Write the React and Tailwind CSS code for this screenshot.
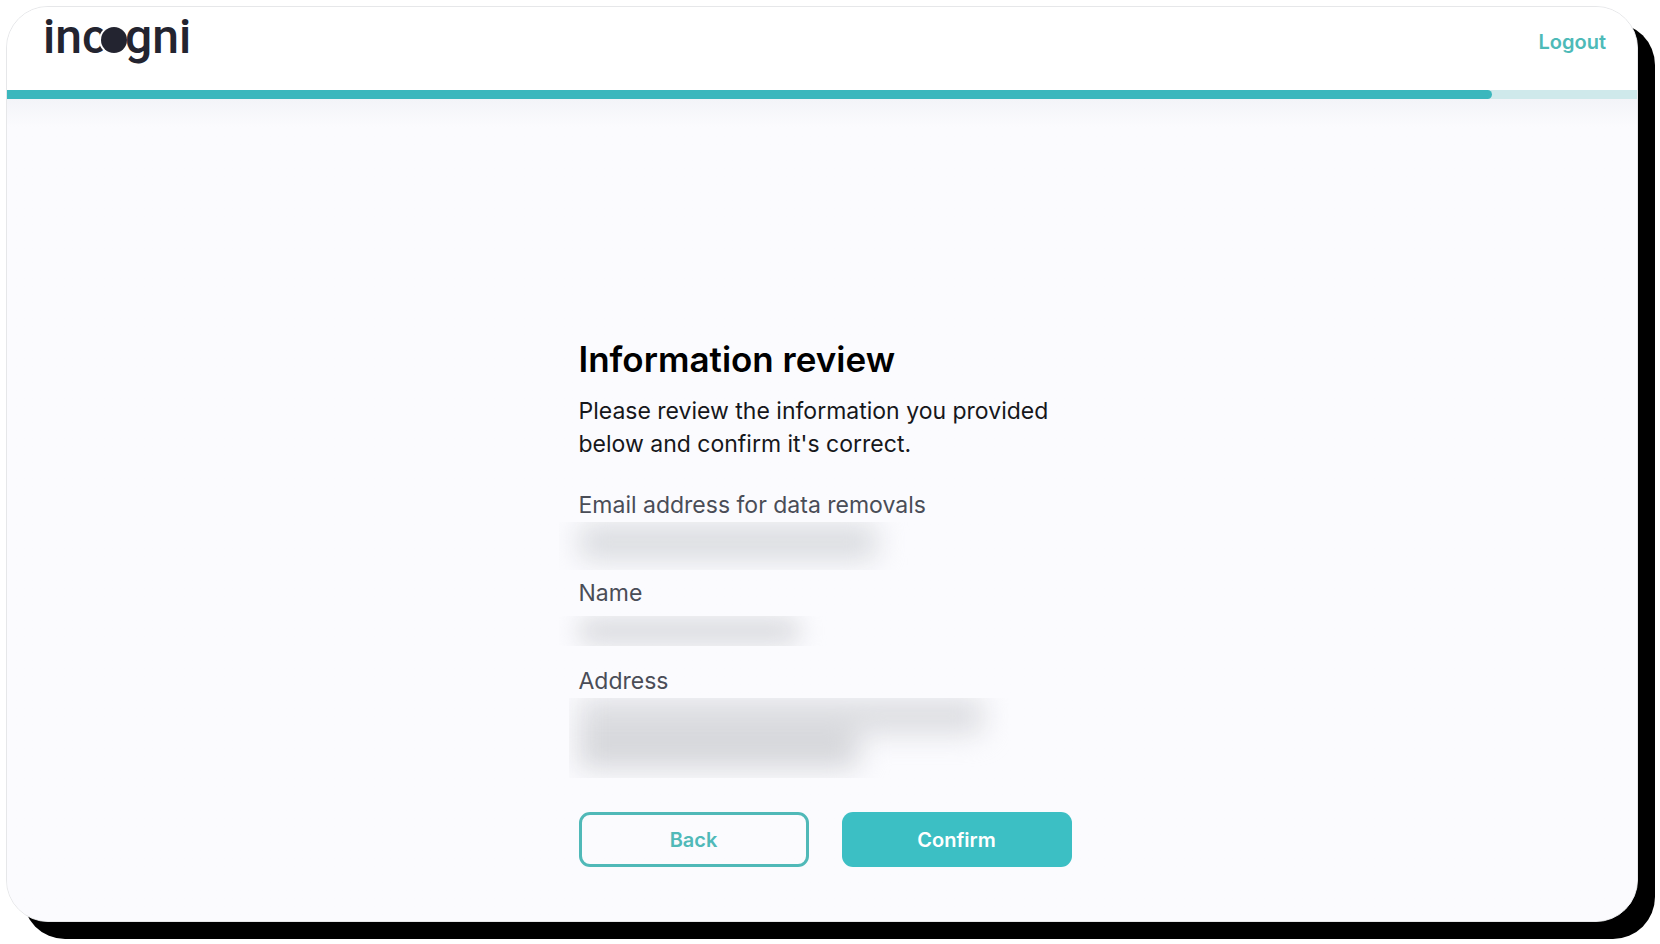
const PROGRESS = 91.1;

function App() {
  return (
    <div className="min-h-screen flex bg-white pt-1.5 pl-1.5 pr-[22px] pb-[22px] font-['Inter',sans-serif]">
      <div className="flex-1 flex flex-col overflow-hidden rounded-[42px] border border-[#e6e7e9] bg-[#fbfbfe] shadow-[17px_17px_0_0_#000]">
        <Header />
        <ProgressBar value={PROGRESS} />
        <main className="flex-1 flex flex-col items-center justify-end pl-[30px] pr-6 pb-[54px] bg-linear-to-b from-[#f3f4f8] to-[#fbfbfe] to-[28px]">
          <InformationReview />
        </main>
      </div>
    </div>
  );
}

// Sub-components

const Header = () => (
  <header className="h-[83px] flex items-start justify-between pl-9 pr-[31px] bg-white">
    <Logo />
    <a href="#logout" className="mt-5 text-[20px] leading-[30px] font-semibold text-[#4dbab8]">Logout</a>
  </header>
);

const Logo = () => (
  <a href="#home" aria-label="incogni" className="flex items-center mt-1 font-['Roboto',sans-serif] text-[48px] leading-[52px] font-medium text-[#232430]">
    <span>inc</span>
    <svg viewBox="0 0 30 30" className="relative w-[30px] h-[30px] -ml-2 -mr-1 mt-1.5">
      <circle cx="15" cy="15" r="15" fill="#fff" />
      <circle cx="15" cy="15" r="13" fill="currentColor" />
    </svg>
    <span className="relative">gni</span>
  </a>
);

const ProgressBar = ({ value }) => (
  <div role="progressbar" aria-label="Setup progress" aria-valuenow={value} aria-valuemin={0} aria-valuemax={100} className="h-[9px] bg-[#cfe9eb]">
    <div className="h-full rounded-r-full bg-[#3bb7bd]" style={{ width: `${value}%` }} />
  </div>
);

const InformationReview = () => (
  <section className="w-full max-w-[493px]">
    <h1 className="text-[35px] leading-[48px] font-semibold text-black">Information review</h1>
    <p className="mt-3 text-[23px] leading-[33px] text-[#16171b]">
      Please review the information you provided below and confirm it's correct.
    </p>
    <dl className="mt-7 text-[23px] leading-[33px] text-[#4a4d57]">
      <dt>Email address for data removals</dt>
      <dd className="-ml-5 h-[55px]">
        <div className="w-[352px] h-12 pl-5 pt-0.5 overflow-hidden">
          <div className="w-[298px] h-9 rounded-lg bg-[#dadce0] blur-[14px]" />
        </div>
      </dd>
      <dt>Name</dt>
      <dd className="-ml-5 h-[55px] pt-1.5">
        <div className="w-[270px] h-[30px] pl-5 pt-0.5 overflow-hidden">
          <div className="w-[220px] h-[26px] rounded-lg bg-[#d9dade] blur-[12px]" />
        </div>
      </dd>
      <dt>Address</dt>
      <dd className="-ml-2.5">
        <div className="w-[440px] h-20 pl-2.5 overflow-hidden">
          <div className="blur-[14px]">
            <div className="w-[404px] h-9 rounded-r-lg bg-[#dcdde1]" />
            <div className="w-[280px] h-[34px] rounded-r-lg bg-[#d5d6da]" />
          </div>
        </div>
      </dd>
    </dl>
    <div className="mt-[34px] grid grid-cols-2 gap-[33px]">
      <button type="button" className="h-[55px] rounded-[11px] border-[3px] border-[#50b9b8] text-[20px] leading-[30px] font-semibold text-[#50b9b8]">Back</button>
      <button type="button" className="h-[55px] rounded-[11px] bg-[#3cbfc4] text-[20px] leading-[30px] font-semibold text-white">Confirm</button>
    </div>
  </section>
);

export default App;
